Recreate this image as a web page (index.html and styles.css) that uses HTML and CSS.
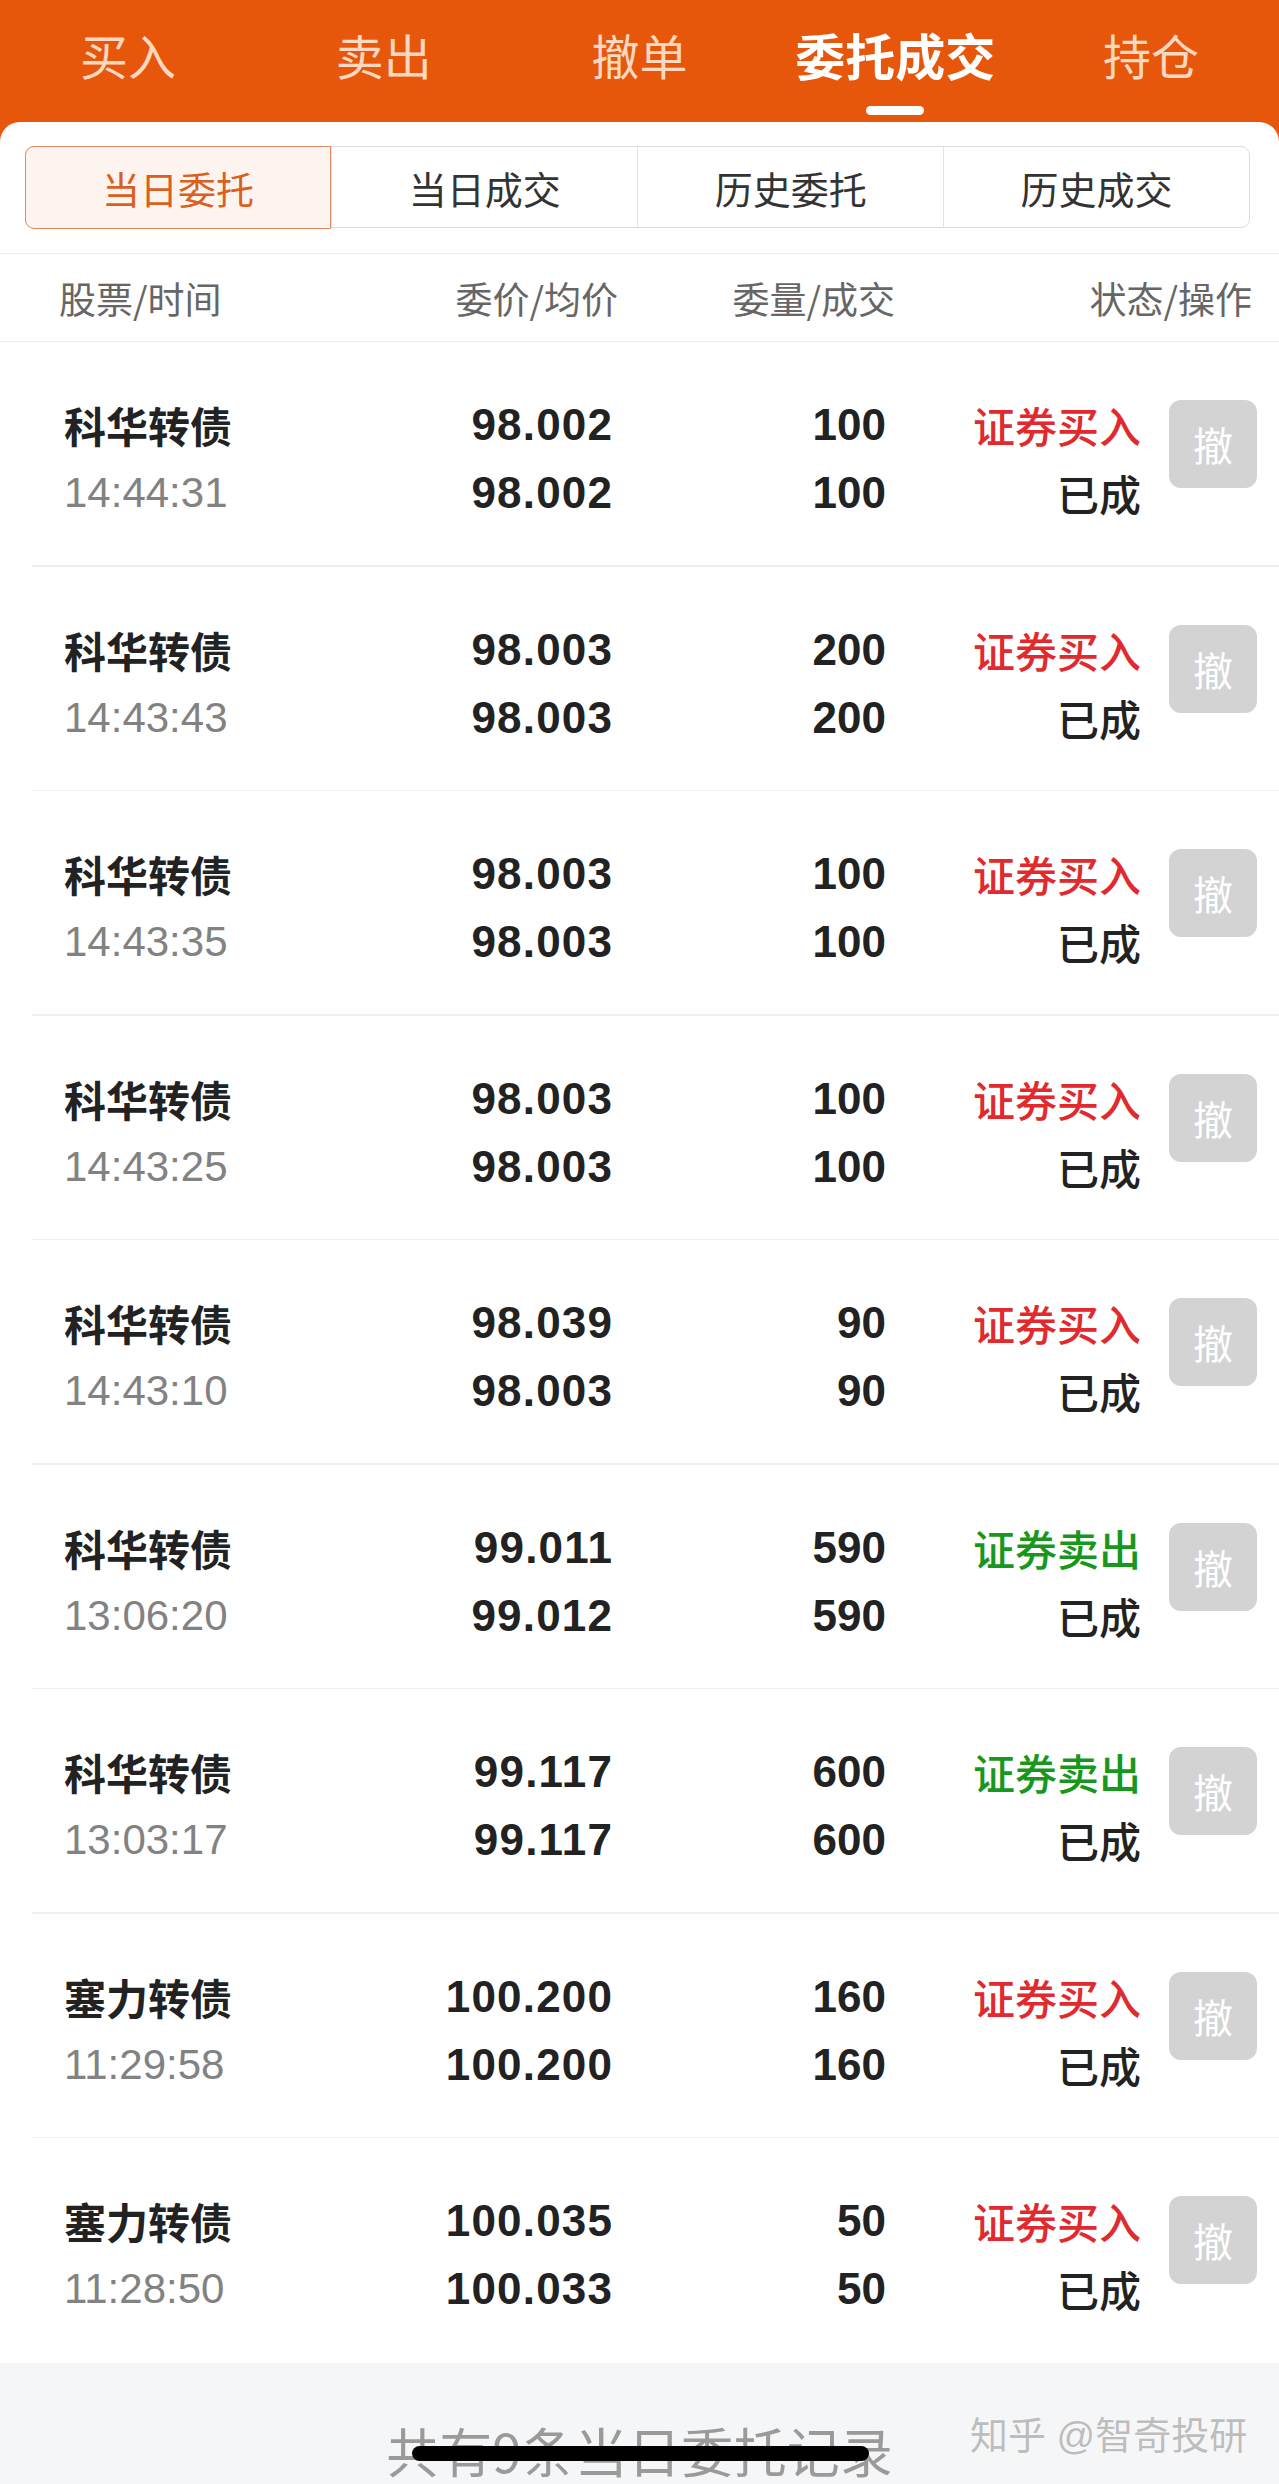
FILE: index.html
```html
<!DOCTYPE html>
<html lang="zh-CN">
<head>
<meta charset="utf-8">
<title>委托成交</title>
<link rel="stylesheet" href="styles.css">
</head>
<body>
<div class="app">
  <nav class="tabs">
    <div class="tab"><span class="tab-label">买入</span><i class="tab-bar"></i></div>
    <div class="tab"><span class="tab-label">卖出</span><i class="tab-bar"></i></div>
    <div class="tab"><span class="tab-label">撤单</span><i class="tab-bar"></i></div>
    <div class="tab active"><span class="tab-label">委托成交</span><i class="tab-bar"></i></div>
    <div class="tab"><span class="tab-label">持仓</span><i class="tab-bar"></i></div>
  </nav>

  <main class="card">
    <div class="seg-wrap">
      <div class="seg">
        <div class="seg-item selected">当日委托</div>
        <div class="seg-item">当日成交</div>
        <div class="seg-item">历史委托</div>
        <div class="seg-item">历史成交</div>
      </div>
    </div>

    <div class="thead">
      <span class="th th-name">股票/时间</span>
      <span class="th th-price">委价/均价</span>
      <span class="th th-qty">委量/成交</span>
      <span class="th th-status">状态/操作</span>
    </div>

    <div class="list">
      <div class="row">
        <div class="c-name"><b class="name">科华转债</b><span class="time">14:44:31</span></div>
        <div class="c-num price"><span>98.002</span><span>98.002</span></div>
        <div class="c-num"><span>100</span><span>100</span></div>
        <div class="c-status"><span class="buy">证券买入</span><span class="done">已成</span></div>
        <div class="btn">撤</div>
      </div>
      <div class="row">
        <div class="c-name"><b class="name">科华转债</b><span class="time">14:43:43</span></div>
        <div class="c-num price"><span>98.003</span><span>98.003</span></div>
        <div class="c-num"><span>200</span><span>200</span></div>
        <div class="c-status"><span class="buy">证券买入</span><span class="done">已成</span></div>
        <div class="btn">撤</div>
      </div>
      <div class="row">
        <div class="c-name"><b class="name">科华转债</b><span class="time">14:43:35</span></div>
        <div class="c-num price"><span>98.003</span><span>98.003</span></div>
        <div class="c-num"><span>100</span><span>100</span></div>
        <div class="c-status"><span class="buy">证券买入</span><span class="done">已成</span></div>
        <div class="btn">撤</div>
      </div>
      <div class="row">
        <div class="c-name"><b class="name">科华转债</b><span class="time">14:43:25</span></div>
        <div class="c-num price"><span>98.003</span><span>98.003</span></div>
        <div class="c-num"><span>100</span><span>100</span></div>
        <div class="c-status"><span class="buy">证券买入</span><span class="done">已成</span></div>
        <div class="btn">撤</div>
      </div>
      <div class="row">
        <div class="c-name"><b class="name">科华转债</b><span class="time">14:43:10</span></div>
        <div class="c-num price"><span>98.039</span><span>98.003</span></div>
        <div class="c-num"><span>90</span><span>90</span></div>
        <div class="c-status"><span class="buy">证券买入</span><span class="done">已成</span></div>
        <div class="btn">撤</div>
      </div>
      <div class="row">
        <div class="c-name"><b class="name">科华转债</b><span class="time">13:06:20</span></div>
        <div class="c-num price"><span>99.011</span><span>99.012</span></div>
        <div class="c-num"><span>590</span><span>590</span></div>
        <div class="c-status"><span class="sell">证券卖出</span><span class="done">已成</span></div>
        <div class="btn">撤</div>
      </div>
      <div class="row">
        <div class="c-name"><b class="name">科华转债</b><span class="time">13:03:17</span></div>
        <div class="c-num price"><span>99.117</span><span>99.117</span></div>
        <div class="c-num"><span>600</span><span>600</span></div>
        <div class="c-status"><span class="sell">证券卖出</span><span class="done">已成</span></div>
        <div class="btn">撤</div>
      </div>
      <div class="row">
        <div class="c-name"><b class="name">塞力转债</b><span class="time">11:29:58</span></div>
        <div class="c-num price"><span>100.200</span><span>100.200</span></div>
        <div class="c-num"><span>160</span><span>160</span></div>
        <div class="c-status"><span class="buy">证券买入</span><span class="done">已成</span></div>
        <div class="btn">撤</div>
      </div>
      <div class="row">
        <div class="c-name"><b class="name">塞力转债</b><span class="time">11:28:50</span></div>
        <div class="c-num price"><span>100.035</span><span>100.033</span></div>
        <div class="c-num"><span>50</span><span>50</span></div>
        <div class="c-status"><span class="buy">证券买入</span><span class="done">已成</span></div>
        <div class="btn">撤</div>
      </div>
    </div>

    <footer class="foot">
      <div class="foot-text">共有9条当日委托记录</div>
      <div class="watermark">知乎 @智奇投研</div>
      <div class="home-bar"></div>
    </footer>
  </main>
</div>
</body>
</html>
```
FILE: styles.css
```css
* { box-sizing: border-box; }
html, body { margin: 0; padding: 0; }
body {
  width: 1279px;
  height: 2484px;
  overflow: hidden;
  font-family: "Liberation Sans", "Noto Sans CJK SC", sans-serif;
  color: #222;
  background: #e6570b;
}
.app {
  display: flex;
  flex-direction: column;
  height: 2484px;
  background: #e6570b;
}

/* top tabs */
.tabs {
  display: flex;
  height: 122px;
  flex: none;
}
.tab {
  flex: 1;
  display: flex;
  flex-direction: column;
  align-items: center;
  padding-top: 2px;
}
.tab-label {
  height: 104px;
  line-height: 104px;
  font-size: 48px;
  color: #fcd8c0;
  font-family: "Noto Sans CJK SC", sans-serif;
}
.tab-bar {
  display: block;
  width: 58px;
  height: 9px;
  border-radius: 5px;
  background: transparent;
}
.tab.active .tab-label {
  color: #fff;
  font-weight: 700;
  font-size: 50px;
}
.tab.active .tab-bar { background: #fff; }

/* card */
.card {
  flex: 1;
  display: flex;
  flex-direction: column;
  background: #fff;
  border-radius: 20px 20px 0 0;
  overflow: hidden;
}
.seg-wrap {
  padding: 24px 29px 25px 25px;
  border-bottom: 1px solid #ececec;
}
.seg {
  display: flex;
  height: 82px;
  border: 1.5px solid #dcdcdc;
  border-radius: 9px;
}
.seg-item {
  flex: 1;
  display: flex;
  align-items: center;
  justify-content: center;
  font-family: "Noto Sans CJK SC", sans-serif;
  font-size: 38px;
  color: #333;
  border-left: 1.5px solid #e3e3e3;
}
.seg-item:first-child { border-left: none; }
.seg-item.selected {
  color: #d9601e;
  background: #fdf4ef;
  border: 1.5px solid #de8a62;
  border-radius: 9px 0 0 9px;
  margin: -1.5px 0 -1.5px -1.5px;
}

/* table header */
.thead {
  display: grid;
  grid-template-columns: 300px 259px 277px 357px;
  height: 88px;
  padding-left: 59px;
  align-items: center;
  border-bottom: 1.5px solid #ececec;
  font-family: "Noto Sans CJK SC", sans-serif;
  font-size: 37px;
  color: #666;
}
.th-price, .th-qty, .th-status { text-align: right; }

/* rows */
.list { display: flex; flex-direction: column; }
.row {
  display: grid;
  grid-template-columns: 300px 248px 274px 255px 116px;
  height: 224.5px;
  padding-left: 64px;
  padding-top: 49px;
  position: relative;
}
.row::after {
  content: "";
  position: absolute;
  left: 32px;
  right: 0;
  bottom: 0;
  height: 1.5px;
  background: #efefef;
}
.row:last-child::after { display: none; }
.c-name, .c-num, .c-status {
  display: flex;
  flex-direction: column;
}
.c-name > *, .c-num > *, .c-status > * {
  display: block;
  height: 68px;
  line-height: 68px;
}
.name {
  font-family: "Noto Sans CJK SC", sans-serif;
  font-weight: 700;
  font-size: 42px;
  color: #222;
}
.time {
  font-size: 42px;
  color: #828282;
}
.c-num {
  text-align: right;
  font-size: 44px;
  font-weight: 700;
  color: #222;
}
.c-num.price span {
  letter-spacing: 1.2px;
  margin-right: -1.2px;
}
.c-status {
  text-align: right;
  font-family: "Noto Sans CJK SC", sans-serif;
  font-size: 42px;
}
.buy { color: #e02a2e; font-weight: 500; }
.sell { color: #17981c; font-weight: 500; }
.done { color: #222; font-weight: 500; }
.btn {
  width: 88px;
  height: 88px;
  margin-left: 28px;
  margin-top: 9px;
  border-radius: 12px;
  background: #d3d3d3;
  color: #fff;
  font-family: "Noto Sans CJK SC", sans-serif;
  font-size: 40px;
  display: flex;
  align-items: center;
  justify-content: center;
}

/* footer */
.foot {
  flex: 1;
  position: relative;
  background: #f5f6f8;
  padding-top: 61px;
}
.foot-text {
  text-align: center;
  font-family: "Noto Sans CJK SC", sans-serif;
  font-size: 53px;
  line-height: 53px;
  color: #9a9a9a;
}
.watermark {
  position: absolute;
  left: 970px;
  top: 42px;
  font-family: "Liberation Sans", "Noto Sans CJK SC", sans-serif;
  font-size: 38px;
  color: #bdbdbd;
  text-shadow: 0 0 2px #fff;
  white-space: nowrap;
}
.home-bar {
  position: absolute;
  left: 412px;
  top: 83px;
  width: 457px;
  height: 15px;
  border-radius: 8px;
  background: #000;
}
```
